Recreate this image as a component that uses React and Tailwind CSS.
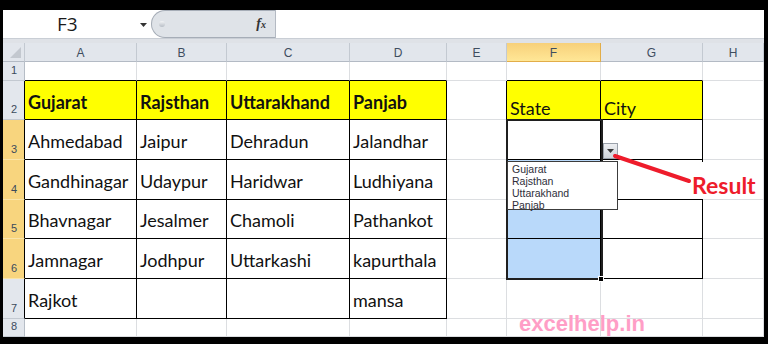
import React from "react";

const COLS = ["A", "B", "C", "D", "E", "F", "G", "H"];

const DATA = {
  2: { 0: "Gujarat", 1: "Rajsthan", 2: "Uttarakhand", 3: "Panjab", 5: "State", 6: "City" },
  3: { 0: "Ahmedabad", 1: "Jaipur", 2: "Dehradun", 3: "Jalandhar" },
  4: { 0: "Gandhinagar", 1: "Udaypur", 2: "Haridwar", 3: "Ludhiyana" },
  5: { 0: "Bhavnagar", 1: "Jesalmer", 2: "Chamoli", 3: "Pathankot" },
  6: { 0: "Jamnagar", 1: "Jodhpur", 2: "Uttarkashi", 3: "kapurthala" },
  7: { 0: "Rajkot", 3: "mansa" },
};

const inT1 = (r, c) => r >= 2 && r <= 7 && c >= 0 && c <= 3;
const inT2 = (r, c) => r >= 2 && r <= 6 && (c === 5 || c === 6);
const inT = (r, c) => inT1(r, c) || inT2(r, c);

function Cell({ r, c }) {
  const rightBlack = inT(r, c) || inT(r, c + 1);
  const bottomBlack = inT(r, c) || inT(r + 1, c);
  const text = DATA[r] && DATA[r][c];
  const yellow = r === 2 && inT(r, c);
  const selected = c === 5 && r >= 4 && r <= 6;
  const bold = r === 2 && c <= 3;
  const stateCity = r === 2 && (c === 5 || c === 6);

  let cls = "flex min-w-0 overflow-visible whitespace-nowrap border-r border-b px-[3px] text-[18px] leading-none text-[#111] ";
  cls += rightBlack ? "border-r-black " : "border-r-[#dcdee1] ";
  if (r === 2 && c === 5) cls += "border-b-[#5b5bd6] ";
  else cls += bottomBlack ? "border-b-black " : "border-b-[#dcdee1] ";
  if (yellow) cls += "bg-[#ffff00] ";
  else if (selected) cls += "bg-[#b9d9fa] ";
  else cls += "bg-white ";
  if (bold) cls += "font-bold items-center pt-[3px] ";
  else if (stateCity) cls += "items-end pb-[2px] ";
  else cls += "items-center pt-[2px] ";
  return <div className={cls}>{text}</div>;
}

function RowHeader({ r }) {
  const hl = r >= 3 && r <= 6;
  const tableEdge = r >= 2 && r <= 7;
  let cls = "flex items-end pl-[8px] pb-[4px] border-b border-r text-[11px] leading-none font-['Liberation_Sans',sans-serif] text-[#3b4b5c] ";
  cls += hl ? "bg-[#f8d57e] border-b-[#fbe5a8] " : "bg-[#e3e7ed] border-b-[#c3c9d1] ";
  cls += tableEdge ? "border-r-black " : "border-r-[#b6bdc6] ";
  return <div className={cls}>{r}</div>;
}

function ColHeader({ c }) {
  const hl = c === 5;
  const cls = hl
    ? "flex items-center justify-center pt-[1px] border-r border-b border-r-[#e2ad49] border-b-[#e2ad49] bg-gradient-to-b from-[#f7d07a] to-[#ffe796] text-[12px] leading-none font-['Liberation_Sans',sans-serif] text-[#3e4d5f]"
    : "flex items-center justify-center pt-[1px] border-r border-b border-r-[#c3c9d1] border-b-[#b3bac4] bg-[#e2e6ec] text-[12px] leading-none font-['Liberation_Sans',sans-serif] text-[#3e4d5f]";
  return <div className={cls}>{COLS[c]}</div>;
}

function FormulaBar() {
  return (
    <div className="flex h-[28px] bg-white">
      <div className="relative flex w-[148px] items-center">
        <span className="ml-[54px] font-['Open_Sans',sans-serif] text-[19px] leading-none text-[#1a1a1a]">F3</span>
        <svg className="absolute left-[137px] top-[13px]" width="7" height="4" viewBox="0 0 7 4">
          <path d="M0 0 L7 0 L3.5 4 Z" fill="#333" />
        </svg>
      </div>
      <div className="relative flex w-[124px] items-center justify-end rounded-l-full border border-r-0 border-[#a6adb7] bg-[#dfe3e8] pr-[9px]">
        <div className="absolute left-[7px] top-[10px] h-[6px] w-[6px] rounded-full bg-gradient-to-b from-[#f2f4f6] to-[#b8bec6]" />
        <span className="font-['Liberation_Serif',serif] text-[14px] font-bold italic leading-none text-[#333]">
          f<span className="text-[10px]">x</span>
        </span>
      </div>
      <div className="flex-1 border-l border-[#b4bac3] bg-white" />
    </div>
  );
}

export default function App() {
  const rows = [1, 2, 3, 4, 5, 6, 7, 8];
  return (
    <div className="h-[344px] w-[768px] overflow-hidden bg-black pl-[3px] pr-[4px] pt-[10px] font-['Lato',sans-serif]">
      <FormulaBar />
      <div className="h-[5px] border-t border-[#c9ced5] bg-[#dfe2e7]" />
      <div className="relative">
        <div className="grid grid-cols-[22px_112px_90px_123px_97px_60px_94px_102px_61px] grid-rows-[19px_19px_39px_40px_40px_39px_40px_40px_18px] bg-white">
          <div className="relative border-b border-r border-b-[#b3bac4] border-r-[#c3c9d1] bg-[#e2e6ec]">
            <svg className="absolute bottom-[3px] right-[3px]" width="11" height="11" viewBox="0 0 11 11">
              <path d="M11 0 L11 11 L0 11 Z" fill="#c3c8cf" />
            </svg>
          </div>
          {COLS.map((_, c) => (
            <ColHeader key={"h" + c} c={c} />
          ))}
          {rows.map((r) => (
            <React.Fragment key={r}>
              <RowHeader r={r} />
              {COLS.map((_, c) => (
                <Cell key={r + "-" + c} r={r} c={c} />
              ))}
            </React.Fragment>
          ))}
        </div>

        {/* selection outline F3:F6 */}
        <div className="absolute left-[503px] top-[76px] h-[161px] w-[97px] border-2 border-[#1f1f1f]" />
        <div className="absolute left-[595px] top-[233px] h-[6px] w-[6px] border border-white bg-black" />

        {/* dropdown button */}
        <div className="absolute left-[600px] top-[100px] flex h-[16px] w-[15px] items-center justify-center border border-[#9aa1aa] bg-gradient-to-b from-[#eceef1] to-[#cfd4da]">
          <svg width="7" height="4" viewBox="0 0 7 4">
            <path d="M0 0 L7 0 L3.5 4 Z" fill="#3a3a3a" />
          </svg>
        </div>

        {/* dropdown list */}
        <div className="absolute left-[504px] top-[118px] flex h-[49px] w-[111px] flex-col border border-[#3c3c3c] bg-white pl-[4px] pt-[1px] font-['Liberation_Sans',sans-serif] text-[10.5px] leading-[12px] text-[#2e2e3a]">
          <span>Gujarat</span>
          <span>Rajsthan</span>
          <span>Uttarakhand</span>
          <span>Panjab</span>
        </div>

        {/* Result label */}
        <div className="absolute left-[686px] top-[119px] flex h-[37px] w-[72px] items-end bg-white pb-[2px] pl-[3px] text-[23px] font-bold leading-none text-[#ee1c2b]">
          Result
        </div>

        {/* red line */}
        <svg className="pointer-events-none absolute left-[0px] top-[0px]" width="761" height="294">
          <line x1="612" y1="113" x2="686" y2="138" stroke="#ee1c2b" strokeWidth="4" strokeLinecap="round" />
        </svg>

        {/* watermark */}
        <div className="absolute left-[516px] top-[270px] font-['Liberation_Sans',sans-serif] text-[22px] font-bold leading-none text-[#ff9ec6]">
          excelhelp.in
        </div>
      </div>
    </div>
  );
}
